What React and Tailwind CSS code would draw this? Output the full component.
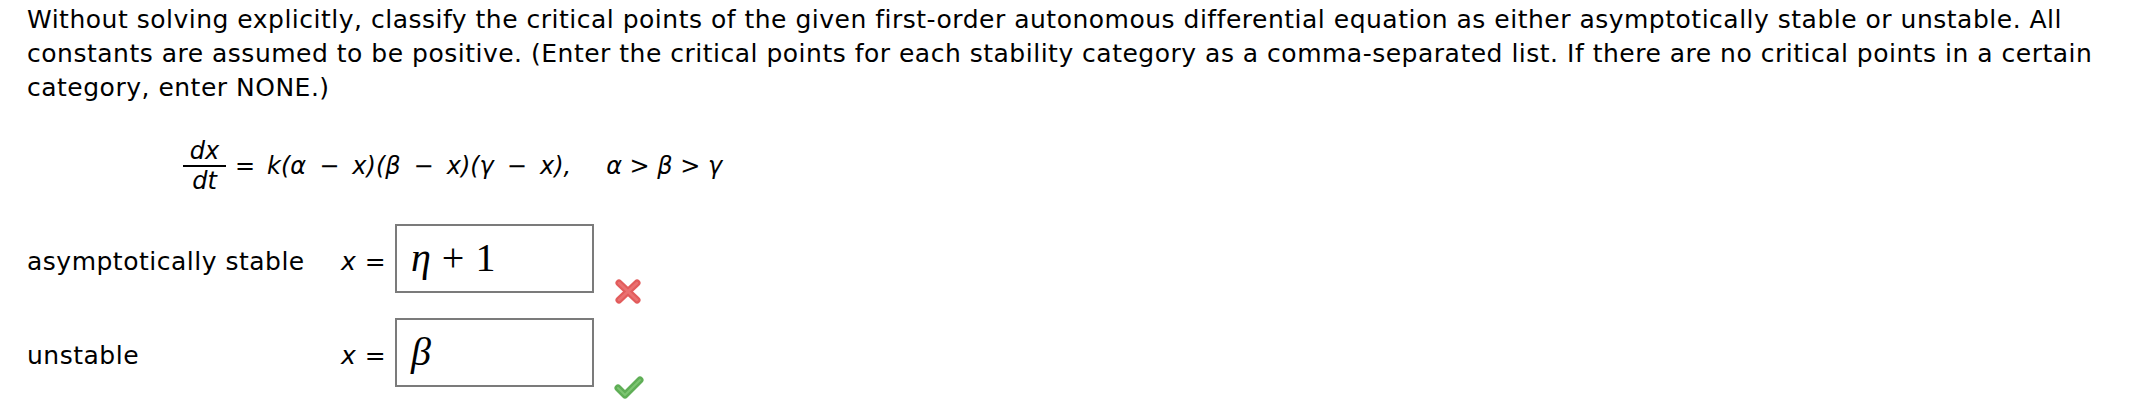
import React from "react";

const CrossMark = () => (
  <svg width="30" height="27" viewBox="0 0 30 27">
    <path d="M6 5 L24 22 M24 5 L6 22" stroke="#e25c5c" strokeWidth="7" strokeLinecap="round" />
    <path d="M6 5 L24 22 M24 5 L6 22" stroke="#f08080" strokeWidth="2.5" strokeLinecap="round" opacity="0.6" />
  </svg>
);

const CheckMark = () => (
  <svg width="32" height="25" viewBox="0 0 32 25">
    <path d="M5 13 L12 20 L27 5" fill="none" stroke="#5fae56" strokeWidth="7" strokeLinecap="round" strokeLinejoin="round" />
    <path d="M5 13 L12 20 L27 5" fill="none" stroke="#8fd384" strokeWidth="2" strokeLinecap="round" strokeLinejoin="round" opacity="0.6" />
  </svg>
);

const Minus = () => <span className="not-italic mx-[13px]">−</span>;

const AnswerRow = ({ label, answer, correct, iconTop }) => (
  <div className="flex items-start h-[69px]">
    <div className="w-[314px] pt-[21px]">{label}</div>
    <div className="w-[54px] pt-[21px] italic whitespace-nowrap">
      x <span className="not-italic">=</span>
    </div>
    <div className="w-[199px] h-[69px] border-2 border-[#7b7b7b] pl-[14px] pt-[8px] font-['Liberation_Serif',serif] text-[40px] leading-[48px]">
      {answer}
    </div>
    <div className={`ml-[19px] ${iconTop}`}>{correct ? <CheckMark /> : <CrossMark />}</div>
  </div>
);

export default function App() {
  return (
    <div className="min-h-screen bg-white text-black pl-[27px] pt-[3px] font-['DejaVu_Sans',sans-serif] text-[25px] leading-[34px] tracking-[0.5px]">
      <p className="whitespace-nowrap">
        Without solving explicitly, classify the critical points of the given first-order autonomous differential
        equation as either asymptotically stable or unstable. All
        <br />
        constants are assumed to be positive. (Enter the critical points for each stability category as a
        comma-separated list. If there are no critical points in a certain
        <br />
        category, enter NONE.)
      </p>

      <div className="flex items-center ml-[156px] mt-[32px] text-[24px] tracking-normal">
        <div className="flex flex-col items-center italic leading-[28px]">
          <span className="px-[4px]">dx</span>
          <span className="w-[43px] border-t-2 border-black"></span>
          <span className="px-[4px]">dt</span>
        </div>
        <span className="ml-[9px]">=</span>
        <span className="ml-[12px] italic whitespace-nowrap">
          k(α<Minus />x)(β<Minus />x)(γ<Minus />x),
        </span>
        <span className="ml-[35px] italic whitespace-nowrap">
          α <span className="not-italic">&gt;</span> β <span className="not-italic">&gt;</span> γ
        </span>
      </div>

      <div className="mt-[29px] flex flex-col gap-[25px]">
        <AnswerRow
          label="asymptotically stable"
          answer={
            <span>
              <i>η</i> + 1
            </span>
          }
          correct={false}
          iconTop="mt-[54px]"
        />
        <AnswerRow label="unstable" answer={<i>β</i>} correct={true} iconTop="mt-[57px]" />
      </div>
    </div>
  );
}
